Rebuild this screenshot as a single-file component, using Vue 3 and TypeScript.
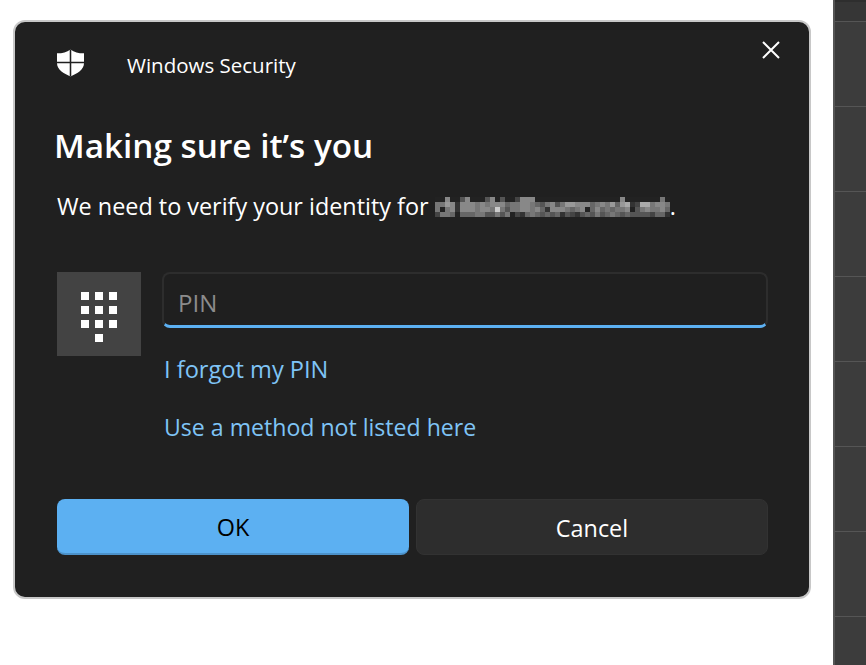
<script setup lang="ts">
const rows = [22, 85, 85, 85, 85, 85, 85, 85];
const mosaicRows = [
  '22822582225825224888222222222222222228222222272',
  '77983888787888677887657857998886787969a34aa7887',
  '727838887887c757788786388876782686767782578778633',
  '47762666775575724367656563543565756765655554663'
];
const blur = mosaicRows.flatMap((r) =>
  r.slice(0, 47).padEnd(47, '2').split('').map((d) => `#${d}${d}${d}${d}${d}${d}`)
);
</script>

<template>
  <div class="page">
    <div class="stage">
      <section class="dialog">
        <header class="head">
          <svg class="shield" width="27" height="28" viewBox="0 0 28 28">
            <path d="M14 0 C18 3 22 4 28 4 V14 C28 21 21 25 14 28 C7 25 0 21 0 14 V4 C6 4 10 3 14 0 Z" fill="#fff" />
            <path d="M14 0 V28 M0 13.5 H28" stroke="#202020" stroke-width="1.6" fill="none" />
          </svg>
          <span class="app">Windows Security</span>
          <button class="close" aria-label="Close">
            <svg width="18" height="18" viewBox="0 0 18 18"><path d="M1 1 L17 17 M17 1 L1 17" stroke="#fff" stroke-width="2" /></svg>
          </button>
        </header>
        <h1>Making sure it’s you</h1>
        <p class="lead">We need to verify your identity for <span class="mosaic"><i v-for="(c, i) in blur" :key="i" :style="{ background: c }"></i></span>.</p>
        <div class="cred">
          <div class="keypad"><i v-for="n in 9" :key="n"></i><i class="last"></i></div>
          <div class="fields">
            <div class="input">PIN</div>
            <a class="link first">I forgot my PIN</a>
            <a class="link">Use a method not listed here</a>
          </div>
        </div>
        <div class="actions">
          <button class="btn ok">OK</button>
          <button class="btn cancel">Cancel</button>
        </div>
      </section>
    </div>
    <aside class="side">
      <div v-for="(h, i) in rows" :key="i" class="cell" :class="{ top: i === 0 }" :style="{ height: h + 'px' }"></div>
    </aside>
  </div>
</template>

<style>
html, body { margin: 0; background: #fff; }
</style>

<style scoped>
.page { width: 866px; height: 665px; display: flex; overflow: hidden; background: #fff; font-family: "Open Sans", "Noto Sans", sans-serif; }
.stage { flex: 1; padding: 20px 0 0 13px; }
.dialog { box-sizing: border-box; width: 798px; height: 579px; background: #202020; border: 2px solid #c8c8c8; border-radius: 12px; padding: 0 41px 0 42px; color: #fff; }
.head { display: flex; align-items: center; height: 86px; position: relative; }
.shield { margin: -5px 43px 0 0; }
.app { font-size: 20.5px; }
.close { position: absolute; right: -12px; top: 19px; border: 0; padding: 0; background: none; width: 18px; height: 18px; line-height: 0; }
h1 { margin: 15px 0 0 -3px; font-size: 33.3px; line-height: 44px; font-weight: 600; }
.lead { margin: 23px 0 0; font-size: 23.4px; line-height: 32px; white-space: pre; display: flex; align-items: center; }
.mosaic { display: grid; grid-template-columns: repeat(47, 5px); grid-auto-rows: 5px; margin-top: 2px; }
.mosaic i { display: block; }
.cred { display: flex; gap: 21px; margin-top: 50px; }
.keypad { width: 84px; height: 84px; background: #434343; box-sizing: border-box; padding: 20px 24px 0; display: grid; grid-template-columns: repeat(3, 8px); grid-auto-rows: 8px; gap: 6px; }
.keypad i { background: #fff; }
.keypad .last { grid-column: 2; }
.fields { flex: 1; min-width: 0; }
.input { box-sizing: border-box; height: 56px; border: 2px solid #2d2d2d; border-bottom: 3px solid #5cb0f2; border-radius: 8px; padding: 0 14px; font-size: 24px; line-height: 57px; color: #8c8c8c; background: #1f1f1f; }
.link { display: block; color: #7fc4f6; font-size: 23.1px; line-height: 32px; margin: 26px 0 0 2px; }
.link.first { margin-top: 25px; font-size: 23.6px; }
.actions { display: grid; grid-template-columns: 1fr 1fr; gap: 7px; margin-top: 56px; }
.btn { height: 56px; border-radius: 8px; font: inherit; font-size: 23.4px; padding: 1px 0 0; }
.ok { background: #5cb0f2; color: #000; border: 0; border-bottom: 2px solid #4c92ca; }
.cancel { background: #2d2d2d; color: #fff; border: 1px solid #323232; }
.side { width: 33px; box-sizing: border-box; background: #3c3c3c; border-left: 2px solid #555; }
.cell { box-sizing: border-box; border-bottom: 1px solid #555; }
.cell.top { background: #363636; border-top: 2px solid #2e2e2e; }
</style>
